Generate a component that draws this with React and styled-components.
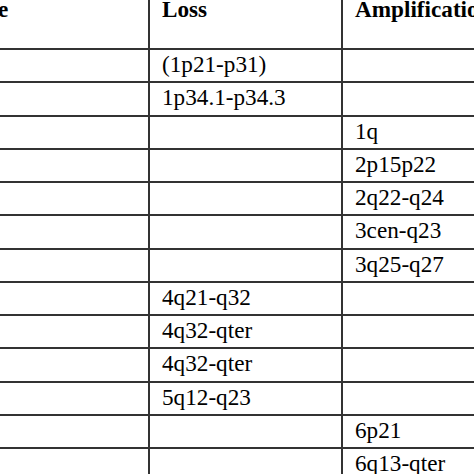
import React from "react";
import styled, { createGlobalStyle } from "styled-components";

const GlobalStyle = createGlobalStyle`
  html, body {
    margin: 0;
    padding: 0;
    background: #ffffff;
    overflow: hidden;
  }
`;

const StyledPage = styled.div`
  width: 474px;
  height: 474px;
  overflow: hidden;
  background: #ffffff;
`;

const StyledTable = styled.table`
  border-collapse: collapse;
  table-layout: fixed;
  width: 900px;
  margin-top: -6px;
  margin-left: -138px;
  font-family: "Liberation Serif", "Times New Roman", serif;
  font-size: 23.2px;
  color: #000000;
`;

const StyledCol = styled.col`
  width: ${(props) => props.width}px;
`;

const StyledHeadCell = styled.th`
  border: 2px solid #333333;
  height: 54px;
  padding: 0 12px;
  text-align: left;
  vertical-align: top;
  font-weight: 700;
  line-height: 26px;
  white-space: nowrap;
  box-sizing: border-box;
`;

const StyledCell = styled.td`
  border: 2px solid #333333;
  height: 33.25px;
  padding: 1px 12px 0;
  vertical-align: top;
  line-height: 26px;
  white-space: nowrap;
  box-sizing: border-box;
`;

const rows = [
  ["", "(1p21-p31)", ""],
  ["", "1p34.1-p34.3", ""],
  ["", "", "1q"],
  ["", "", "2p15p22"],
  ["", "", "2q22-q24"],
  ["", "", "3cen-q23"],
  ["", "", "3q25-q27"],
  ["", "4q21-q32", ""],
  ["", "4q32-qter", ""],
  ["", "4q32-qter", ""],
  ["", "5q12-q23", ""],
  ["", "", "6p21"],
  ["", "", "6q13-qter"],
];

export default function App() {
  return (
    <StyledPage>
      <GlobalStyle />
      <StyledTable>
        <colgroup>
          <StyledCol width={286} />
          <StyledCol width={193} />
          <StyledCol width={421} />
        </colgroup>
        <thead>
          <tr>
            <StyledHeadCell>Chromosome</StyledHeadCell>
            <StyledHeadCell>Loss</StyledHeadCell>
            <StyledHeadCell>Amplification</StyledHeadCell>
          </tr>
        </thead>
        <tbody>
          {rows.map((row, i) => (
            <tr key={i}>
              {row.map((cell, j) => (
                <StyledCell key={j}>{cell}</StyledCell>
              ))}
            </tr>
          ))}
        </tbody>
      </StyledTable>
    </StyledPage>
  );
}
